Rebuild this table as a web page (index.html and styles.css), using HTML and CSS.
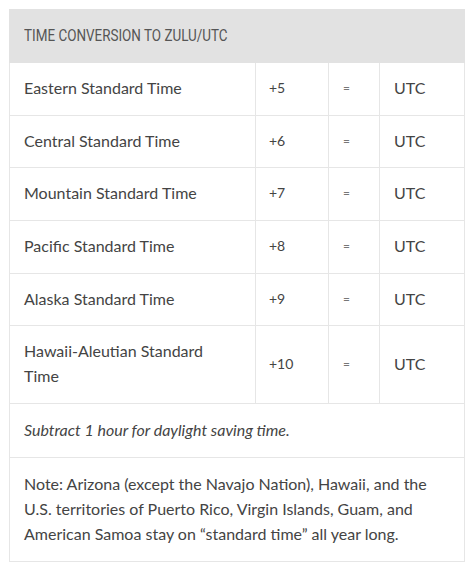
FILE: index.html
```html
<!DOCTYPE html>
<html>
<head>
<meta charset="utf-8">
<link rel="stylesheet" href="styles.css">
</head>
<body>
<table class="tz">
  <colgroup>
    <col class="c-name"><col class="c-off"><col class="c-eq"><col class="c-utc">
  </colgroup>
  <thead>
    <tr><th colspan="4" class="head"><span class="head-text">TIME CONVERSION TO ZULU/UTC</span></th></tr>
  </thead>
  <tbody>
    <tr><td class="name">Eastern Standard Time</td><td class="off">+5</td><td class="eq">=</td><td class="utc">UTC</td></tr>
    <tr><td class="name">Central Standard Time</td><td class="off">+6</td><td class="eq">=</td><td class="utc">UTC</td></tr>
    <tr><td class="name">Mountain Standard Time</td><td class="off">+7</td><td class="eq">=</td><td class="utc">UTC</td></tr>
    <tr><td class="name">Pacific Standard Time</td><td class="off">+8</td><td class="eq">=</td><td class="utc">UTC</td></tr>
    <tr><td class="name">Alaska Standard Time</td><td class="off">+9</td><td class="eq">=</td><td class="utc">UTC</td></tr>
    <tr class="tall"><td class="name">Hawaii-Aleutian Standard Time</td><td class="off">+10</td><td class="eq">=</td><td class="utc">UTC</td></tr>
    <tr><td colspan="4" class="note"><em>Subtract 1 hour for daylight saving time.</em></td></tr>
    <tr><td colspan="4" class="note">Note: Arizona (except the Navajo Nation), Hawaii, and the U.S. territories of Puerto Rico, Virgin Islands, Guam, and American Samoa stay on “standard time” all year long.</td></tr>
  </tbody>
</table>
</body>
</html>
```
FILE: styles.css
```css
html, body { margin: 0; padding: 0; background: #fff; }
body { padding: 9px 0 0 9px; }
.tz {
  border-collapse: collapse;
  width: 455px;
  table-layout: fixed;
  font-family: "Lato", "Open Sans", sans-serif;
  font-size: 16px;
  line-height: 25px;
  color: #444;
}
.c-name { width: 246px; }
.c-off { width: 73px; }
.c-eq { width: 51px; }
.c-utc { width: 85px; }
.tz td, .tz th {
  border: 1px solid #e6e6e6;
  padding: 0 14px 3px;
  text-align: left;
  vertical-align: middle;
}
.tz .head {
  background: #e2e2e2;
  height: 53px;
  box-sizing: border-box;
  font-family: "Roboto", sans-serif;
  font-weight: normal;
  font-size: 16px;
  color: #555;
  border-color: #e2e2e2;
  white-space: nowrap;
  padding-bottom: 1px;
}
.head-text {
  display: inline-block;
  transform: scaleX(0.84);
  transform-origin: left center;
}
.tz tbody tr { height: 52.7px; }
.tz tbody tr.tall { height: 78px; }
.tz .off { padding-left: 13px; font-size: 14px; }
.tz .eq { padding-left: 14px; font-size: 12px; color: #777; }
.tz .utc { padding-left: 14px; }
.tz .note { padding: 13px 14px 15px; }
```
